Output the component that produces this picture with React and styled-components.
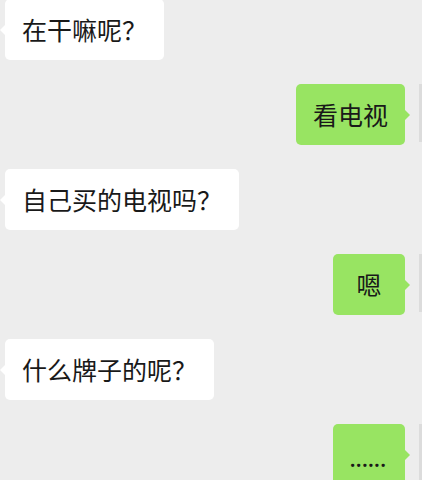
import React from 'react';
import styled, { createGlobalStyle, css } from 'styled-components';

//--------- GLOBAL ----------//
const GlobalStyle = createGlobalStyle`
  html, body {
    margin: 0;
    padding: 0;
    background: #ededed;
  }
  body {
    font-family: "Noto Sans CJK SC", "Noto Sans", sans-serif;
    color: #191919;
    overflow: hidden;
  }
`;

//--------- STYLED COMPONENTS ----------//
const ChatList = styled.main`
  width: 422px;
  height: 481px;
  margin-top: -1px;
  overflow: hidden;
  display: flex;
  flex-direction: column;
  gap: 24px;
  box-sizing: border-box;
  padding: 0 0 0 5px;
`;

const Row = styled.div`
  display: flex;
  align-items: flex-start;
  justify-content: ${(p) => (p.$mine ? 'flex-end' : 'flex-start')};
`;

const Bubble = styled.div`
  position: relative;
  box-sizing: border-box;
  height: 61px;
  min-width: 72px;
  padding: 0 17px;
  display: flex;
  align-items: center;
  justify-content: center;
  border-radius: 5px;
  font-size: 25px;
  line-height: 35px;
  white-space: nowrap;
  background: ${(p) => (p.$mine ? '#98e462' : '#ffffff')};

  &::before {
    content: '';
    position: absolute;
    top: 50%;
    margin-top: -6px;
    border: 6px solid transparent;
    ${(p) =>
      p.$mine
        ? css`
            right: -11px;
            border-left-color: #98e462;
          `
        : css`
            left: -11px;
            border-right-color: #ffffff;
          `}
  }
`;

const Dots = styled.span`
  font-family: "Noto Sans", sans-serif;
  font-size: 21px;
  font-weight: 600;
  letter-spacing: 0.3px;
  transform: translate(-1px, 5px);
`;

const Avatar = styled.div`
  flex-shrink: 0;
  width: 40px;
  height: 58px;
  margin-left: 14px;
  margin-right: -37px;
  background: #dcdcdc;
`;

//--------- DATA ----------//
const messages = [
  { mine: false, text: '在干嘛呢？' },
  { mine: true, text: '看电视' },
  { mine: false, text: '自己买的电视吗？' },
  { mine: true, text: '嗯' },
  { mine: false, text: '什么牌子的呢？' },
  { mine: true, text: '......', dots: true },
];

//--------- APP ----------//
const App = () => {
  return (
    <>
      <GlobalStyle />
      <ChatList>
        {messages.map((m, i) => (
          <Row key={i} $mine={m.mine}>
            <Bubble $mine={m.mine}>
              {m.dots ? <Dots>{m.text}</Dots> : m.text}
            </Bubble>
            {m.mine && <Avatar />}
          </Row>
        ))}
      </ChatList>
    </>
  );
};

export default App;
